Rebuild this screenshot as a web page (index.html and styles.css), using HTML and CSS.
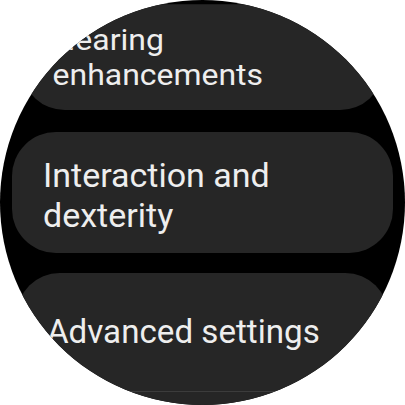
FILE: index.html
```html
<!DOCTYPE html>
<html lang="en">
<head>
    <meta charset="UTF-8">
    <meta name="viewport" content="width=device-width, initial-scale=1.0">
    <title>Accessibility</title>
    <link rel="stylesheet" href="styles.css">
</head>
<body>

    <!-- Watch screen -->
    <div class="watch-screen">
        <div class="menu-list">
            <div class="menu-item menu-item-top">
                <span class="menu-label">Hearing enhancements</span>
            </div>
            <div class="menu-item">
                <span class="menu-label">Interaction and dexterity</span>
            </div>
            <div class="menu-item menu-item-bottom">
                <span class="menu-label">Advanced settings</span>
                <div class="menu-divider"></div>
            </div>
        </div>
    </div>

</body>
</html>
```

FILE: styles.css
```css
/* General styles */
body {
    margin: 0;
    padding: 0;
    background-color: #ffffff;
    font-family: Roboto, "Liberation Sans", sans-serif;
}

/* Round watch screen */
.watch-screen {
    width: 405px;
    height: 405px;
    border-radius: 50%;
    overflow: hidden;
    background-color: #000000;
}

.menu-list {
    display: flex;
    flex-direction: column;
    gap: 20px;
    margin-top: -11px;
    padding: 0 12px;
}

/* Cards */
.menu-item {
    box-sizing: border-box;
    min-height: 121px;
    padding: 23px 31px 18px 31px;
    background-color: #262626;
    border-radius: 44px;
    display: flex;
    flex-direction: column;
    justify-content: center;
}

.menu-label {
    font-size: 34px;
    line-height: 40px;
    color: #eeeeee;
}

/* Cards shrink as they leave the screen */
.menu-item-top {
    padding: 20px 31px 21px 31px;
    margin-bottom: 2px;
    transform: scale(0.94, 0.875);
    transform-origin: center bottom;
}

.menu-item-bottom {
    min-height: 150px;
    padding: 40px 31px 0 31px;
    justify-content: flex-start;
    border-radius: 44px 44px 0 0;
    transform: scale(0.975);
    transform-origin: center top;
}

.menu-divider {
    height: 1px;
    margin: 41px -31px 0 -31px;
    background-color: #3e3e3e;
}
```
